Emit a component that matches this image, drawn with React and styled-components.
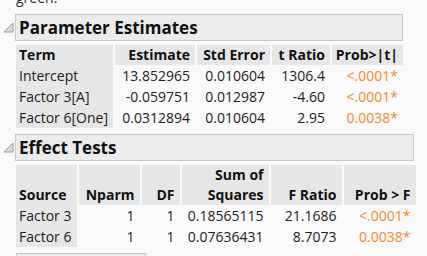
import React from 'react';
import styled, { createGlobalStyle } from 'styled-components';

const GlobalStyle = createGlobalStyle`
  body {
    margin: 0;
    background: #f9f9f9;
    font-family: "Open Sans", "Noto Sans", sans-serif;
    color: #1c1c1c;
  }
`;

const Page = styled.div`
  padding-left: 3px;
  width: 424px;
  height: 256px;
  overflow: hidden;
`;

// tail of the sentence above, scrolled mostly out of view
const Note = styled.div`
  margin: -10px 0 0 13px;
  font-size: 14px;
  line-height: 16px;
  color: #2a2a2a;
`;

const OutlineHead = styled.div`
  display: flex;
  align-items: center;
  margin-top: ${(p) => p.top || 0}px;
`;

const TitleBox = styled.div`
  box-sizing: border-box;
  width: ${(p) => p.width}px;
  height: 27px;
  margin-left: 1px;
  padding-left: 3px;
  display: flex;
  align-items: center;
  background: #ebebeb;
  border: 1px solid #c7c7c7;
  font-size: 17px;
  font-weight: 700;
  color: #111;
`;

const Body = styled.div`
  margin: 4px 0 0 11px;
`;

const Table = styled.table`
  border-collapse: separate;
  border-spacing: 2px 0;
  font-size: 14px;
  table-layout: fixed;
`;

const Head = styled.th`
  width: ${(p) => p.w}px;
  padding: 0 5px 0 3px;
  background: #e6e6e6;
  font-weight: 700;
  line-height: 20px;
  text-align: ${(p) => (p.left ? 'left' : 'right')};
  vertical-align: bottom;
  color: #111;
  white-space: nowrap;
`;

const Cell = styled.td`
  height: 21px;
  padding: 0 5px 0 3px;
  line-height: 21px;
  text-align: ${(p) => (p.left ? 'left' : 'right')};
  background: ${(p) => (p.left ? '#e6e6e6' : 'transparent')};
  color: ${(p) => (p.sig ? '#f08a2c' : '#222')};
  white-space: nowrap;
`;

const Stub = styled.div`
  box-sizing: border-box;
  width: 130px;
  height: 10px;
  margin: 6px 0 0 13px;
  background: #ececec;
  border: 1px solid #c7c7c7;
`;

const Toggle = () => (
  <svg width="11" height="11" viewBox="0 0 11 11">
    <path d="M10 1 L10 10 L1 10 Z" fill="#dcdcdc" stroke="#9a9a9a" strokeWidth="1" strokeLinejoin="round" />
  </svg>
);

const estimates = [
  ['Intercept', '13.852965', '0.010604', '1306.4', '<.0001*'],
  ['Factor 3[A]', '-0.059751', '0.012987', '-4.60', '<.0001*'],
  ['Factor 6[One]', '0.0312894', '0.010604', '2.95', '0.0038*'],
];

const effects = [
  ['Factor 3', '1', '1', '0.18565115', '21.1686', '<.0001*'],
  ['Factor 6', '1', '1', '0.07636431', '8.7073', '0.0038*'],
];

const Row = ({ values }) => (
  <tr>
    {values.map((v, i) => (
      <Cell key={i} left={i === 0} sig={i === values.length - 1}>
        {v}
      </Cell>
    ))}
  </tr>
);

export default function App() {
  return (
    <Page>
      <GlobalStyle />
      <Note>green.</Note>

      <OutlineHead top={8}>
        <Toggle />
        <TitleBox width={388}>Parameter Estimates</TitleBox>
      </OutlineHead>
      <Body>
        <Table>
          <thead>
            <tr>
              <Head left w={89}>Term</Head>
              <Head w={72}>Estimate</Head>
              <Head w={65}>Std Error</Head>
              <Head w={50}>t Ratio</Head>
              <Head w={63}>Prob&gt;|t|</Head>
            </tr>
          </thead>
          <tbody>
            {estimates.map((r) => (
              <Row key={r[0]} values={r} />
            ))}
          </tbody>
        </Table>
      </Body>

      <OutlineHead top={6}>
        <Toggle />
        <TitleBox width={399}>Effect Tests</TitleBox>
      </OutlineHead>
      <Body>
        <Table>
          <thead>
            <tr>
              <Head left w={52}>Source</Head>
              <Head w={53}>Nparm</Head>
              <Head w={30}>DF</Head>
              <Head w={79}>Sum of<br />Squares</Head>
              <Head w={63}>F Ratio</Head>
              <Head w={64}>Prob &gt; F</Head>
            </tr>
          </thead>
          <tbody>
            {effects.map((r) => (
              <Row key={r[0]} values={r} />
            ))}
          </tbody>
        </Table>
      </Body>
      <Stub />
    </Page>
  );
}
